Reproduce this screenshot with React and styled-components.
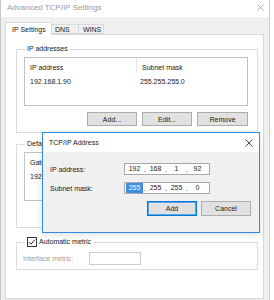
import React from "react";
import styled, { createGlobalStyle } from "styled-components";

const GlobalStyle = createGlobalStyle`
	html, body {
		margin: 0;
		padding: 0;
		background: #ffffff;
	}
	body {
		font-family: "Liberation Sans", Arial, sans-serif;
		font-size: 7px;
		color: #1a1a1a;
	}
`;

const Window = styled.div`
	position: relative;
	width: 270px;
	height: 300px;
	box-sizing: border-box;
	border-left: 1px solid #c9c9c9;
	border-right: 1px solid #cfcfcf;
	background: #f0f0f0;
	overflow: hidden;
`;

const TitleBar = styled.div`
	height: 17px;
	display: flex;
	align-items: center;
	justify-content: space-between;
	padding: 0 5px 2px 6px;
	box-sizing: border-box;
	background: #ffffff;
	color: #9a9a9a;
	font-size: 8px;
`;

const Body = styled.div`
	padding: 5px 5px 0 4px;
`;

const TabRow = styled.div`
	display: flex;
	align-items: flex-end;
	height: 12px;
`;

const Tab = styled.div`
	position: relative;
	z-index: 1;
	box-sizing: border-box;
	height: ${p => (p.$active ? "13px" : "10px")};
	margin-bottom: ${p => (p.$active ? "-1px" : "0")};
	width: ${p => p.$w}px;
	padding-left: ${p => p.$pad}px;
	display: flex;
	align-items: center;
	border: 1px solid #d9d9d9;
	border-bottom: ${p => (p.$active ? "none" : "1px solid #d9d9d9")};
	border-left: ${p => (p.$first ? "1px solid #d9d9d9" : "none")};
	background: ${p => (p.$active ? "#ffffff" : "#f0f0f0")};
	line-height: 9px;
`;

const Panel = styled.div`
	box-sizing: border-box;
	height: 265px;
	background: #ffffff;
	border: 1px solid #d9d9d9;
	padding: 9px 0 0 10px;
`;

const Group = styled.fieldset`
	box-sizing: border-box;
	width: 242px;
	margin: 0 0 ${p => p.$gap || 0}px 0;
	padding: 0 9px ${p => p.$pb}px 6px;
	border: 1px solid #dcdcdc;
	min-width: 0;
`;

const Legend = styled.legend`
	margin-left: 2px;
	padding: 0 2px;
	height: 10px;
	line-height: 10px;
	display: flex;
	align-items: center;
	gap: 2px;
`;

const ListView = styled.div`
	box-sizing: border-box;
	margin: 3px 0 0 1px;
	height: 49px;
	border: 1px solid #c3c3c3;
	background: #ffffff;
`;

const ListHead = styled.div`
	display: flex;
	height: 17px;
	align-items: flex-end;
	padding-bottom: 2px;
	box-sizing: border-box;
`;

const Column = styled.div`
	box-sizing: border-box;
	width: ${p => p.$w}px;
	padding-left: 5px;
	padding-top: 4px;
	height: 15px;
	display: flex;
	align-items: center;
	border-right: ${p => (p.$divide ? "1px solid #e5e5e5" : "none")};
`;

const ListRow = styled.div`
	display: flex;
	height: 12px;
	align-items: center;
`;

const Cell = styled.div`
	box-sizing: border-box;
	width: ${p => p.$w}px;
	padding-left: ${p => p.$pl}px;
`;

const ButtonRow = styled.div`
	display: flex;
	justify-content: flex-end;
	gap: ${p => p.$gap}px;
	margin-top: ${p => p.$mt}px;
	padding-right: ${p => p.$pr || 0}px;
`;

const Button = styled.div`
	box-sizing: border-box;
	width: ${p => p.$w || 50}px;
	height: ${p => p.$h || 14}px;
	display: flex;
	align-items: center;
	justify-content: center;
	background: #e1e1e1;
	border: 1px solid ${p => (p.$default ? "#0078d7" : "#adadad")};
	box-shadow: ${p => (p.$default ? "inset 0 0 0 1px #5aa5e6" : "none")};
	color: #1a1a1a;
`;

const CheckBox = styled.div`
	box-sizing: border-box;
	width: 10px;
	height: 10px;
	border: 1px solid #333333;
	background: #ffffff;
	display: flex;
	align-items: center;
	justify-content: center;
`;

const MetricRow = styled.div`
	display: flex;
	align-items: center;
	margin-top: 5px;
	color: #a0a0a0;
`;

const MetricLabel = styled.div`
	width: 66px;
`;

const DisabledInput = styled.div`
	box-sizing: border-box;
	width: 52px;
	height: 13px;
	border: 1px solid #cccccc;
	background: #ffffff;
`;

const Dialog = styled.div`
	position: absolute;
	left: 41px;
	top: 132px;
	width: 218px;
	height: 101px;
	box-sizing: border-box;
	border: 1px solid #2d8be0;
	background: #f0f0f0;
	box-shadow: 0 2px 8px rgba(0, 0, 0, 0.12);
`;

const DialogTitle = styled.div`
	height: 19px;
	display: flex;
	align-items: center;
	justify-content: space-between;
	padding: 0 6px 0 6px;
	background: #ffffff;
	color: #1a1a1a;
`;

const DialogBody = styled.div`
	padding: 11px 8px 0 7px;
`;

const FieldRow = styled.div`
	display: flex;
	align-items: center;
	margin-bottom: 7px;
`;

const FieldLabel = styled.div`
	width: 74px;
`;

const IpBox = styled.div`
	box-sizing: border-box;
	width: 86px;
	height: 12px;
	border: 1px solid #a8a8a8;
	background: #ffffff;
	display: flex;
	align-items: center;
	padding-left: 1px;
`;

const Seg = styled.span`
	width: 17px;
	height: 10px;
	line-height: 10px;
	text-align: center;
	background: ${p => (p.$selected ? "#3b8fe0" : "transparent")};
	color: ${p => (p.$selected ? "#ffffff" : "#1a1a1a")};
`;

const Dot = styled.span`
	width: 4px;
	text-align: center;
`;

const CloseIcon = ({ color, size }) => (
	<svg width={size} height={size} viewBox="0 0 8 8">
		<path d="M0.5 0.5 L7.5 7.5 M7.5 0.5 L0.5 7.5" stroke={color} strokeWidth="0.9" fill="none" />
	</svg>
);

const IpField = ({ parts, selected }) => (
	<IpBox>
		{parts.map((p, i) => (
			<React.Fragment key={i}>
				{i > 0 && <Dot>.</Dot>}
				<Seg $selected={selected === i}>{p}</Seg>
			</React.Fragment>
		))}
	</IpBox>
);

const AddressList = ({ cols, row }) => (
	<ListView>
		<ListHead>
			<Column $w={112} $divide>{cols[0]}</Column>
			<Column $w={100}>{cols[1]}</Column>
		</ListHead>
		<ListRow>
			<Cell $w={112} $pl={5}>{row[0]}</Cell>
			<Cell $w={100} $pl={3}>{row[1]}</Cell>
		</ListRow>
	</ListView>
);

const App = () => (
	<>
		<GlobalStyle />
		<Window>
			<TitleBar>
				<span>Advanced TCP/IP Settings</span>
				<CloseIcon color="#a0a0a0" size={7} />
			</TitleBar>
			<Body>
				<TabRow>
					<Tab $active $first $w={47} $pad={6}>IP Settings</Tab>
					<Tab $w={27} $pad={3}>DNS</Tab>
					<Tab $w={25} $pad={4}>WINS</Tab>
				</TabRow>
				<Panel>
					<Group $pb={6} $gap={6}>
						<Legend>IP addresses</Legend>
						<AddressList cols={["IP address", "Subnet mask"]} row={["192.168.1.90", "255.255.255.0"]} />
						<ButtonRow $gap={5} $mt={6}>
							<Button>Add...</Button>
							<Button>Edit...</Button>
							<Button $w={51}>Remove</Button>
						</ButtonRow>
					</Group>
					<Group $pb={6} $gap={9}>
						<Legend>Default gateways:</Legend>
						<AddressList cols={["Gateway", "Metric"]} row={["192.168.1.1", "Automatic"]} />
						<ButtonRow $gap={5} $mt={6}>
							<Button>Add...</Button>
							<Button>Edit...</Button>
							<Button $w={51}>Remove</Button>
						</ButtonRow>
					</Group>
					<Group $pb={4}>
						<Legend>
							<CheckBox>
								<svg width="8" height="8" viewBox="0 0 8 8">
									<path d="M1 4.2 L3 6.2 L7 1.6" stroke="#222" strokeWidth="1" fill="none" />
								</svg>
							</CheckBox>
							<span>Automatic metric</span>
						</Legend>
						<MetricRow>
							<MetricLabel>Interface metric:</MetricLabel>
							<DisabledInput />
						</MetricRow>
					</Group>
				</Panel>
			</Body>
			<Dialog>
				<DialogTitle>
					<span>TCP/IP Address</span>
					<CloseIcon color="#333333" size={8} />
				</DialogTitle>
				<DialogBody>
					<FieldRow>
						<FieldLabel>IP address:</FieldLabel>
						<IpField parts={["192", "168", "1", "92"]} />
					</FieldRow>
					<FieldRow>
						<FieldLabel>Subnet mask:</FieldLabel>
						<IpField parts={["255", "255", "255", "0"]} selected={0} />
					</FieldRow>
					<ButtonRow $gap={4} $mt={7}>
						<Button $default $h={15}>Add</Button>
						<Button $h={15}>Cancel</Button>
					</ButtonRow>
				</DialogBody>
			</Dialog>
		</Window>
	</>
);

export default App;
